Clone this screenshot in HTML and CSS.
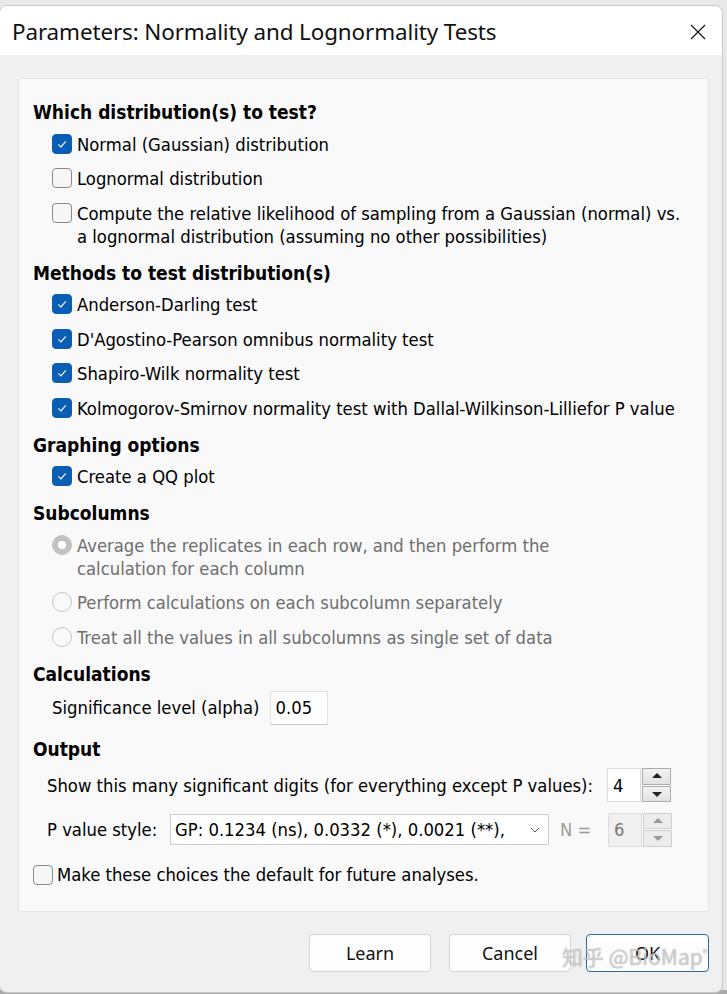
FILE: index.html
```html
<!DOCTYPE html>
<html>
<head>
<meta charset="utf-8">
<link rel="stylesheet" href="styles.css">
</head>
<body>
<div class="backdrop">
  <div class="dialog">
    <div class="titlebar">
      <span class="title">Parameters: Normality and Lognormality Tests</span>
      <svg class="close" width="16" height="16" viewBox="0 0 16 16"><path d="M1 1 L15 15 M15 1 L1 15" stroke="#1a1a1a" stroke-width="1.3" fill="none"/></svg>
    </div>
    <div class="body">
      <div class="panel">
        <div class="heading">Which distribution(s) to test?</div>
        <div class="opt"><span class="cb on"><svg viewBox="0 0 20 20"><path d="M6 10.5 L8.8 13.2 L14.2 7.2" stroke="#fff" stroke-width="1.2" fill="none"/></svg></span><span class="lbl">Normal (Gaussian) distribution</span></div>
        <div class="opt"><span class="cb"></span><span class="lbl">Lognormal distribution</span></div>
        <div class="opt"><span class="cb"></span><span class="lbl">Compute the relative likelihood of sampling from a Gaussian (normal) vs.<br>a lognormal distribution (assuming no other possibilities)</span></div>

        <div class="heading">Methods to test distribution(s)</div>
        <div class="opt"><span class="cb on"><svg viewBox="0 0 20 20"><path d="M6 10.5 L8.8 13.2 L14.2 7.2" stroke="#fff" stroke-width="1.2" fill="none"/></svg></span><span class="lbl">Anderson-Darling test</span></div>
        <div class="opt"><span class="cb on"><svg viewBox="0 0 20 20"><path d="M6 10.5 L8.8 13.2 L14.2 7.2" stroke="#fff" stroke-width="1.2" fill="none"/></svg></span><span class="lbl">D'Agostino-Pearson omnibus normality test</span></div>
        <div class="opt"><span class="cb on"><svg viewBox="0 0 20 20"><path d="M6 10.5 L8.8 13.2 L14.2 7.2" stroke="#fff" stroke-width="1.2" fill="none"/></svg></span><span class="lbl">Shapiro-Wilk normality test</span></div>
        <div class="opt"><span class="cb on"><svg viewBox="0 0 20 20"><path d="M6 10.5 L8.8 13.2 L14.2 7.2" stroke="#fff" stroke-width="1.2" fill="none"/></svg></span><span class="lbl">Kolmogorov-Smirnov normality test with Dallal-Wilkinson-Lilliefor P value</span></div>

        <div class="heading">Graphing options</div>
        <div class="opt"><span class="cb on"><svg viewBox="0 0 20 20"><path d="M6 10.5 L8.8 13.2 L14.2 7.2" stroke="#fff" stroke-width="1.2" fill="none"/></svg></span><span class="lbl">Create a QQ plot</span></div>

        <div class="heading">Subcolumns</div>
        <div class="opt disabled"><span class="rb on"></span><span class="lbl">Average the replicates in each row, and then perform the<br>calculation for each column</span></div>
        <div class="opt disabled"><span class="rb"></span><span class="lbl">Perform calculations on each subcolumn separately</span></div>
        <div class="opt disabled"><span class="rb"></span><span class="lbl">Treat all the values in all subcolumns as single set of data</span></div>

        <div class="heading">Calculations</div>
        <div class="row sig">
          <span class="lbl">Significance level (alpha)</span>
          <span class="field alpha">0.05</span>
        </div>

        <div class="heading out">Output</div>
        <div class="row digits">
          <span class="lbl">Show this many significant digits (for everything except P values):</span>
          <span class="field num">4</span>
          <span class="spin">
            <span class="sbtn"><svg viewBox="0 0 10 6" width="10" height="6"><path d="M0 5 L5 0 L10 5 Z" fill="#222"/></svg></span>
            <span class="sbtn"><svg viewBox="0 0 10 6" width="10" height="6"><path d="M0 1 L5 6 L10 1 Z" fill="#222"/></svg></span>
          </span>
        </div>
        <div class="row pstyle">
          <span class="lbl plbl">P value style:</span>
          <span class="combo"><span class="ctext">GP: 0.1234 (ns), 0.0332 (*), 0.0021 (**),</span><svg class="chev" viewBox="0 0 10 6" width="10" height="6"><path d="M1 1 L5 5 L9 1" stroke="#555" stroke-width="1" fill="none"/></svg></span>
          <span class="nlbl">N =</span>
          <span class="field num dis">6</span>
          <span class="spin dis">
            <span class="sbtn"><svg viewBox="0 0 10 6" width="10" height="6"><path d="M0 5 L5 0 L10 5 Z" fill="#9a9a9a"/></svg></span>
            <span class="sbtn"><svg viewBox="0 0 10 6" width="10" height="6"><path d="M0 1 L5 6 L10 1 Z" fill="#9a9a9a"/></svg></span>
          </span>
        </div>
        <div class="row make">
          <span class="cb"></span><span class="lbl">Make these choices the default for future analyses.</span>
        </div>
      </div>
      <div class="buttons">
        <button class="btn learn">Learn</button>
        <button class="btn cancel">Cancel</button>
        <button class="btn ok">OK</button>
      </div>
    </div>
  </div>
  <div class="watermark">知乎 @BioMap<sup>®</sup></div>
</div>
</body>
</html>
```

FILE: styles.css
```css
html, body {
  margin: 0;
  padding: 0;
}
body {
  width: 727px;
  height: 994px;
  overflow: hidden;
  background: #e9e9e9;
  font-family: "DejaVu Sans Condensed", "DejaVu Sans", sans-serif;
}
.backdrop {
  position: relative;
  width: 727px;
  height: 994px;
  padding-top: 5px;
  box-sizing: border-box;
  background: linear-gradient(to bottom, #e9e9e9 0, #e9e9e9 990px, #a9a9a9 990px);
}
.dialog {
  width: 722px;
  height: 986px;
  margin-left: -1px;
  border: 1px solid #c9c9c9;
  border-radius: 8px;
  overflow: hidden;
  background: #f0f0f0;
  display: flex;
  flex-direction: column;
}
.titlebar {
  height: 49px;
  background: #ffffff;
  display: flex;
  align-items: center;
  justify-content: space-between;
  padding: 0 16px 0 12px;
  flex-shrink: 0;
}
.title {
  font-family: "Noto Sans", "Open Sans", sans-serif;
  font-size: 22.4px;
  color: #111;
  letter-spacing: -0.1px;
  margin-top: 2px;
}
.close {
  width: 16px;
  height: 16px;
  margin-top: 2px;
}
.body {
  flex: 1;
  display: flex;
  flex-direction: column;
}
.panel {
  margin: 23px 13px 0 18px;
  background: #f9f9f9;
  border: 1px solid #e6e6e6;
  padding: 14px 0 14px 14px;
  display: flex;
  flex-direction: column;
  color: #000;
  font-size: 18.3px;
}
.heading {
  height: 34px;
  box-sizing: border-box;
  padding-top: 8px;
  line-height: 23px;
  font-weight: bold;
  font-size: 19px;
}
.heading.out {
  margin-top: 3px;
}
.opt {
  display: flex;
  align-items: flex-start;
  gap: 5px;
  padding: 5.75px 0 5.75px 19px;
  line-height: 23px;
}
.opt.disabled {
  color: #6e6e6e;
}
.cb {
  width: 20px;
  height: 20px;
  box-sizing: border-box;
  border: 1px solid #8b8b8b;
  border-radius: 4px;
  background: #f6f6f6;
  flex-shrink: 0;
  margin-top: 1px;
  display: block;
}
.cb.on {
  background: #0a5fb4;
  border-color: #0a5fb4;
}
.cb svg {
  display: block;
  width: 18px;
  height: 18px;
}
.rb {
  width: 20px;
  height: 20px;
  box-sizing: border-box;
  border: 1px solid #c6c6c6;
  border-radius: 50%;
  background: #f9f9f9;
  flex-shrink: 0;
  margin-top: 1px;
  position: relative;
}
.rb.on {
  background: #c2c2c2;
  border-color: #c2c2c2;
}
.rb.on::after {
  content: "";
  position: absolute;
  left: 5px;
  top: 5px;
  width: 8px;
  height: 8px;
  border-radius: 50%;
  background: #fff;
}
.row {
  display: flex;
  align-items: center;
}
.sig {
  height: 38px;
  padding-left: 19px;
  gap: 10px;
}
.field {
  background: #fff;
  box-sizing: border-box;
  border: 1px solid #e2e2e2;
  border-bottom-color: #c8c8c8;
  display: flex;
  align-items: center;
  padding-left: 5px;
}
.alpha {
  width: 58px;
  height: 34px;
}
.digits {
  height: 43px;
  padding-left: 14px;
}
.digits .lbl {
  margin-right: 14px;
}
.num {
  width: 34px;
  height: 34px;
  border-color: #dcdcdc;
}
.num.dis {
  background: #f0f0f0;
  color: #777;
}
.spin {
  width: 29px;
  height: 34px;
  margin-left: 1px;
  display: flex;
  flex-direction: column;
  gap: 1px;
}
.sbtn {
  flex: 1;
  box-sizing: border-box;
  border: 1px solid #adadad;
  background: linear-gradient(#f2f2f2, #e2e2e2);
  display: flex;
  align-items: center;
  justify-content: center;
}
.sbtn svg {
  display: block;
}
.spin.dis .sbtn {
  border-color: #cfcfcf;
  background: #ececec;
}
.pstyle {
  height: 46px;
  padding-left: 14px;
}
.plbl {
  width: 123px;
  flex-shrink: 0;
}
.combo {
  width: 379px;
  height: 31px;
  flex-shrink: 0;
  box-sizing: border-box;
  background: #fff;
  border: 1px solid #cdcdcd;
  display: flex;
  align-items: center;
  justify-content: space-between;
  padding: 0 8px 0 4px;
}
.ctext {
  white-space: nowrap;
  overflow: hidden;
}
.chev {
  flex-shrink: 0;
}
.nlbl {
  color: #9c9c9c;
  width: 59px;
  padding-left: 11px;
  box-sizing: border-box;
  flex-shrink: 0;
}
.make {
  height: 44px;
  gap: 4px;
}
.make .cb {
  margin-top: 0;
}
.buttons {
  display: flex;
  justify-content: flex-end;
  padding: 22px 13px 0 0;
}
.btn {
  width: 122px;
  height: 38px;
  box-sizing: border-box;
  background: #fdfdfd;
  border: 1px solid #d3d3d3;
  border-radius: 4px;
  font-family: "Noto Sans", "Open Sans", sans-serif;
  font-size: 18px;
  color: #111;
  padding: 0;
}
.btn.cancel {
  margin-left: 18px;
}
.btn.ok {
  width: 123px;
  margin-left: 15px;
  border: 1px solid #2f6a96;
  box-shadow: inset 0 0 0 1px #ffffff;
}
.watermark {
  position: absolute;
  left: 562px;
  top: 940px;
  font-family: "Noto Sans CJK SC", "Noto Sans", sans-serif;
  font-size: 21px;
  line-height: 26px;
  color: rgba(255, 255, 255, 0.55);
  text-shadow: 0 0 1px rgba(90, 90, 90, 0.7);
  pointer-events: none;
  white-space: nowrap;
}
.watermark sup {
  font-size: 10px;
}
```
